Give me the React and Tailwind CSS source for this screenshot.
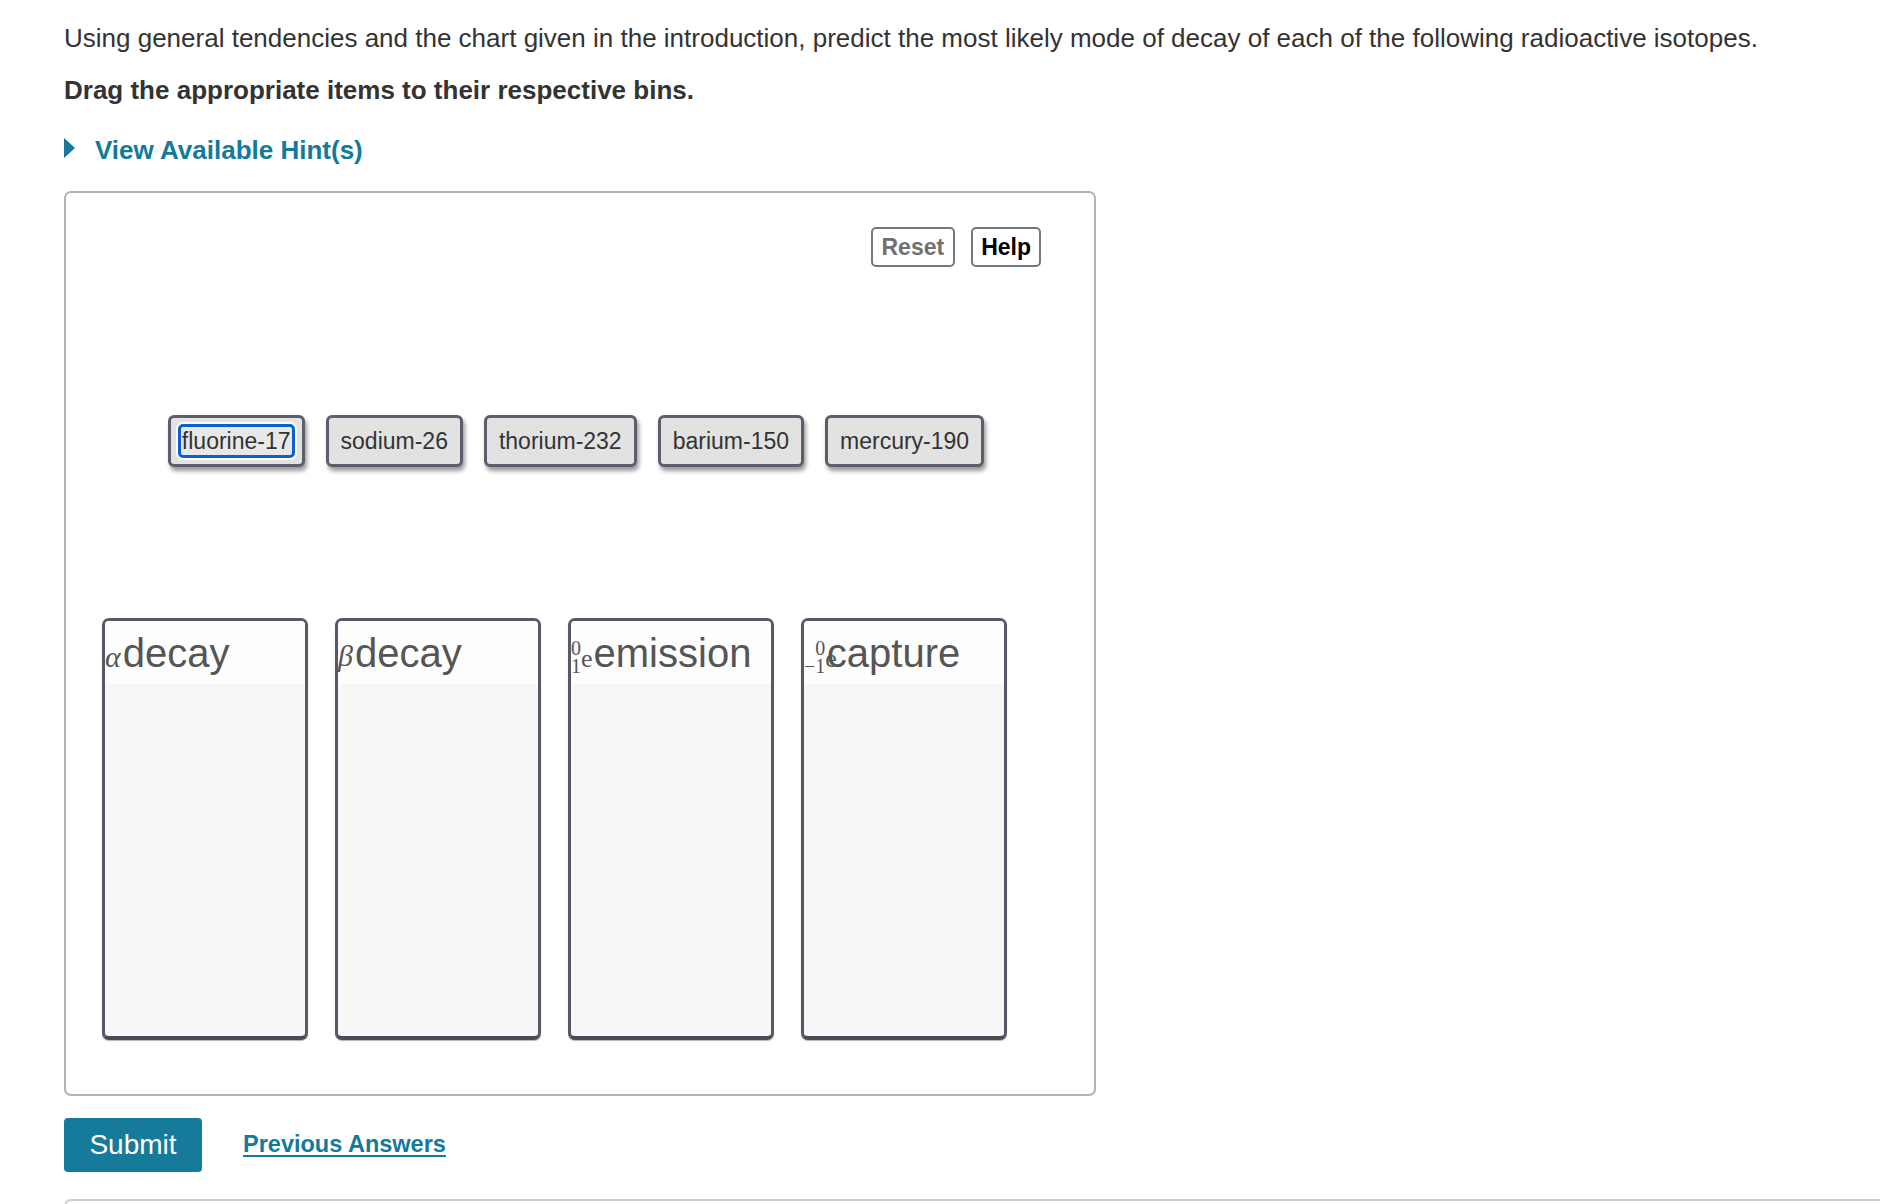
import React from "react";

const sans = { fontFamily: '"Liberation Sans", Arial, Helvetica, sans-serif' };

function Item({ label, focused }) {
  return (
    <div className="h-[52px] px-[11px] flex items-center rounded-[6px] border-[3px] border-[#5b5e6b] bg-[#e2e2e2] shadow-[2px_4px_4px_rgba(0,0,0,0.4)] text-[23px] text-[#333]">
      {focused ? (
        <span className="px-[1px] h-[34px] flex items-center border-[3px] border-[#0b5fd3] rounded-[5px] bg-[#e8e8e8] ring-2 ring-white leading-none -mx-[4px]">
          {label}
        </span>
      ) : (
        <span className="px-[1px] leading-none">{label}</span>
      )}
    </div>
  );
}

function Bin({ children }) {
  return (
    <div className="w-[206px] h-[422px] rounded-[7px] border-[3px] border-[#575a66] border-b-[4px] border-b-[#4a4c55] bg-[#f7f7f7] overflow-hidden flex flex-col shadow-[0_1px_1px_rgba(0,0,0,0.3)]">
      <div className="h-[63px] bg-[#fdfdfd] flex items-center text-[40px] text-[#555] leading-none whitespace-nowrap">
        {children}
      </div>
    </div>
  );
}

const serif = { fontFamily: '"Liberation Serif", "DejaVu Serif", serif' };

export default function App() {
  return (
    <div className="w-[1880px] min-h-[1204px] bg-white pl-[64px] overflow-hidden" style={sans}>
      <p className="mt-[22px] h-[32px] leading-[32px] text-[26px] text-[#333] whitespace-nowrap">
        Using general tendencies and the chart given in the introduction, predict the most likely mode of decay of each of the following radioactive isotopes.
      </p>
      <p className="mt-[20px] h-[32px] leading-[32px] text-[26px] font-bold text-[#333] whitespace-nowrap">
        Drag the appropriate items to their respective bins.
      </p>
      <div className="mt-[28px] h-[32px] flex items-center">
        <svg width="11" height="20" viewBox="0 0 11 20" className="mr-[20px] -mt-[4px]">
          <path d="M0 0 L11 10 L0 20 Z" fill="#137a9a" />
        </svg>
        <span className="text-[26px] font-bold text-[#137a9a] leading-[32px]">View Available Hint(s)</span>
      </div>

      <div className="mt-[25px] w-[1032px] h-[905px] border-2 border-[#b3b3b3] rounded-[7px] flex flex-col">
        <div className="mt-[34px] h-[40px] flex justify-end gap-[16px] pr-[53px]">
          <button className="h-[40px] px-[9px] border-2 border-[#6f7a82] rounded-[5px] bg-white text-[23px] font-bold text-[#707070]">Reset</button>
          <button className="h-[40px] px-[8px] border-2 border-[#6f7a82] rounded-[5px] bg-white text-[23px] font-bold text-black">Help</button>
        </div>
        <div className="mt-[148px] h-[52px] flex justify-center gap-[21px] pr-[8px]">
          <Item label="fluorine-17" focused />
          <Item label="sodium-26" />
          <Item label="thorium-232" />
          <Item label="barium-150" />
          <Item label="mercury-190" />
        </div>
        <div className="mt-[151px] pl-[36px] flex gap-[27px]">
          <Bin>
            <span className="italic text-[30px] mt-[8px] mr-[2px]" style={serif}>α</span>
            <span>decay</span>
          </Bin>
          <Bin>
            <span className="italic text-[30px] mt-[6px] mr-[2px]" style={serif}>β</span>
            <span>decay</span>
          </Bin>
          <Bin>
            <span className="inline-flex items-center mt-[8px]" style={serif}>
              <span className="flex flex-col text-[20px] leading-[18px]">
                <span>0</span>
                <span>1</span>
              </span>
              <span className="text-[26px] mt-[4px] mr-[1px]">e</span>
            </span>
            <span>emission</span>
          </Bin>
          <Bin>
            <span className="inline-flex items-center mt-[8px]" style={serif}>
              <span className="flex flex-col items-end text-[20px] leading-[18px]">
                <span>0</span>
                <span>−1</span>
              </span>
              <span className="text-[26px] mt-[4px] -mr-[10px]">e</span>
            </span>
            <span>capture</span>
          </Bin>
        </div>
      </div>

      <div className="mt-[22px] flex items-center">
        <button className="h-[54px] w-[138px] bg-[#167b9a] rounded-[4px] text-white text-[28px]">Submit</button>
        <a className="ml-[41px] text-[23.5px] font-bold text-[#137a9a] underline underline-offset-[3px] decoration-2">Previous Answers</a>
      </div>
      <div className="mt-[27px] h-[40px] border-2 border-b-0 border-r-0 border-[#cfcfcf] rounded-tl-[7px]"></div>
    </div>
  );
}
